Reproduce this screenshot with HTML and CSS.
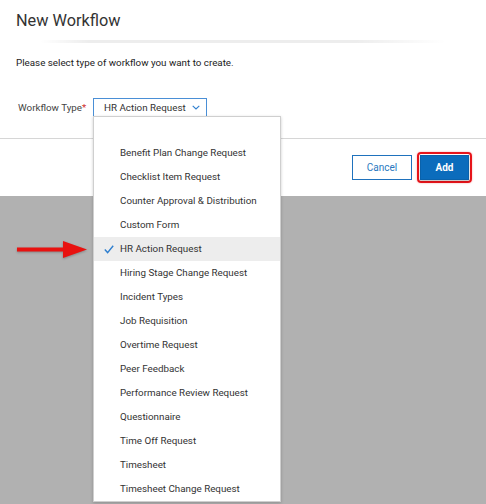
FILE: index.html
```html
<!DOCTYPE html>
<html>
<head>
<meta charset="utf-8">
<link rel="stylesheet" href="styles.css">
</head>
<body>
<div class="dialog">
  <div class="header">
    <h1 class="title">New Workflow</h1>
    <div class="sep"></div>
  </div>
  <div class="content">
    <p class="intro">Please select type of workflow you want to create.</p>
    <div class="field">
      <label class="label">Workflow Type<span class="req">*</span></label>
      <div class="select-wrap">
        <div class="select">
          <span>HR Action Request</span>
          <svg class="chev" width="8" height="5" viewBox="0 0 8 5"><path d="M0.7 0.8 L4 4 L7.3 0.8" fill="none" stroke="#2f7fcf" stroke-width="1.1"/></svg>
        </div>
        <ul class="menu">
          <li class="blank"></li>
          <li>Benefit Plan Change Request</li>
          <li>Checklist Item Request</li>
          <li>Counter Approval &amp; Distribution</li>
          <li>Custom Form</li>
          <li class="active"><svg class="check" width="10" height="9" viewBox="0 0 10 9"><path d="M0.8 4.6 L3.6 7.6 L9.2 0.8" fill="none" stroke="#2f7fcf" stroke-width="1.4"/></svg>HR Action Request</li>
          <li>Hiring Stage Change Request</li>
          <li>Incident Types</li>
          <li>Job Requisition</li>
          <li>Overtime Request</li>
          <li>Peer Feedback</li>
          <li>Performance Review Request</li>
          <li>Questionnaire</li>
          <li>Time Off Request</li>
          <li>Timesheet</li>
          <li>Timesheet Change Request</li>
        </ul>
      </div>
    </div>
  </div>
  <div class="footer">
    <button class="btn cancel">Cancel</button>
    <span class="highlight"><button class="btn add">Add</button></span>
  </div>
</div>
<svg class="arrow" width="74" height="22" viewBox="0 0 74 22"><path d="M0 7.5 H46 V1 L70 9.5 L46 18 V11.5 H0 Z" fill="#e8110f"/></svg>
</body>
</html>
```
FILE: styles.css
```css
html, body {
  margin: 0;
  padding: 0;
}
body {
  background: #b1b1b1;
  font-family: Roboto, "Liberation Sans", Arial, sans-serif;
  color: #333;
  width: 486px;
  height: 504px;
  overflow: hidden;
  position: relative;
}
.dialog {
  background: #fff;
  height: 196px;
}
.header {
  padding: 11px 0 0 0;
}
.title {
  margin: 0 0 0 16px;
  font-weight: 400;
  font-size: 16.3px;
  line-height: 20px;
  color: #333;
}
.sep {
  margin: 9px 40px 0 40px;
  height: 3px;
  background: linear-gradient(to right, rgba(0,0,0,0) 0%, rgba(0,0,0,0.07) 12%, rgba(0,0,0,0.07) 78%, rgba(0,0,0,0) 100%);
  border-radius: 2px;
}
.content {
  padding: 13px 16px 0 16px;
  height: 96px;
  box-sizing: border-box;
  border-bottom: 1px solid #d6d6d6;
}
.intro {
  margin: 0;
  font-size: 9.8px;
  line-height: 14px;
  color: #222;
}
.field {
  display: flex;
  align-items: center;
  margin-top: 28px;
  margin-left: 2px;
}
.label {
  font-size: 9.8px;
  color: #444;
  width: 75px;
}
.req {
  color: #d0302b;
}
.select-wrap {
  position: relative;
}
.select {
  box-sizing: border-box;
  width: 114px;
  height: 19px;
  border: 1px solid #4a8fd6;
  display: flex;
  align-items: center;
  padding-left: 10px;
  font-size: 9.8px;
  color: #333;
  background: #fff;
}
.chev {
  margin-left: 6px;
}
.menu {
  position: absolute;
  left: 0;
  top: 18px;
  width: 188px;
  box-sizing: border-box;
  margin: 0;
  padding: 0;
  list-style: none;
  background: #fff;
  border: 1px solid #cfcfcf;
  box-shadow: 0 1px 3px rgba(0,0,0,0.2);
  z-index: 5;
}
.menu li {
  height: 24px;
  line-height: 24px;
  padding-left: 26px;
  font-size: 9.8px;
  color: #333;
  position: relative;
}
.menu li.active {
  background: #ededed;
}
.check {
  position: absolute;
  left: 10px;
  top: 8px;
}
.footer {
  display: flex;
  justify-content: flex-end;
  align-items: center;
  padding: 13px 14px 0 0;
  gap: 5px;
}
.btn {
  font-family: Roboto, "Liberation Sans", Arial, sans-serif;
  font-size: 10px;
  height: 25px;
  box-sizing: border-box;
  cursor: pointer;
}
.cancel {
  width: 60px;
  background: #fff;
  border: 1px solid #1f72bd;
  color: #2a78c0;
}
.highlight {
  display: inline-flex;
  border: 2px solid #e8141a;
  border-radius: 4px;
  padding: 1px;
  box-shadow: 0 0 2px rgba(232,20,26,0.4);
}
.add {
  width: 49px;
  background: #0b6cbc;
  border: 1px solid #0a62ab;
  color: #fff;
  font-weight: 700;
  box-shadow: 0 1px 2px rgba(0,0,0,0.3);
}
.arrow {
  position: absolute;
  left: 17px;
  top: 240px;
  filter: drop-shadow(0 1px 1px rgba(0,0,0,0.25));
}
```
